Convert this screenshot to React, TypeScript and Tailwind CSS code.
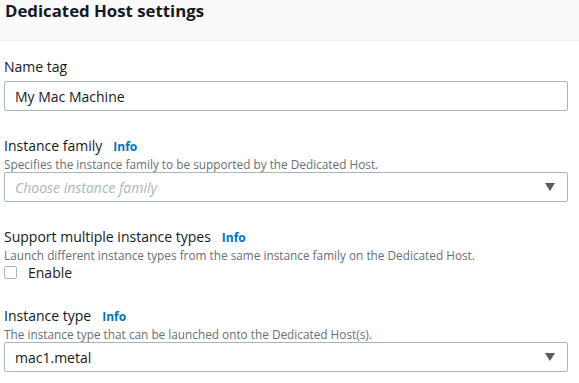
import { type ReactNode } from "react";

const font = { fontFamily: '"Open Sans", "Noto Sans", Arial, sans-serif' };

const Caret = () => (
  <svg
    aria-hidden="true"
    viewBox="0 0 10 8"
    className="h-[8px] w-[10px] fill-[#545b64]"
  >
    <path d="M0 0h10L5 8z" />
  </svg>
);

type FieldProps = {
  label: string;
  info?: boolean;
  description?: string;
  children: ReactNode;
};

const Field = ({ label, info, description, children }: FieldProps) => (
  <div className="flex flex-col">
    <div className="flex h-5 items-baseline gap-[11px] text-[14px] leading-5 text-[#16191f]">
      <span>{label}</span>
      {info ? (
        <a href="#" className="text-[12px] font-bold text-[#0073bb]">
          Info
        </a>
      ) : null}
    </div>
    {description ? (
      <p className="text-[11.8px] leading-4 text-[#687078]">{description}</p>
    ) : null}
    {children}
  </div>
);

const Select = ({ value, placeholder }: { value?: string; placeholder?: string }) => (
  <div className="flex h-[30px] items-center justify-between rounded-[2px] border border-[#aab7b8] pl-[10px] pr-[12px] text-[14px]">
    {value ? (
      <span className="text-[#16191f]">{value}</span>
    ) : (
      <span className="italic text-[#aab7b8]">{placeholder}</span>
    )}
    <Caret />
  </div>
);

export default function App() {
  return (
    <div className="h-[383px] w-[579px] overflow-hidden bg-white" style={font}>
      <div className="h-[41px] border-b border-[#eaeded] bg-[#fafafa] px-[5px]">
        <h2 className="text-[16.8px] font-bold leading-[22px] text-[#16191f]">
          Dedicated Host settings
        </h2>
      </div>
      <div className="flex flex-col gap-[25px] pl-[4px] pr-[11px] pt-[16px]">
        <Field label="Name tag">
          <input
            defaultValue="My Mac Machine"
            className="mt-[4px] h-[30px] rounded-[2px] border border-[#aab7b8] px-[10px] text-[14px] text-[#16191f] outline-none"
          />
        </Field>
        <Field
          label="Instance family"
          info
          description="Specifies the instance family to be supported by the Dedicated Host."
        >
          <Select placeholder="Choose instance family" />
        </Field>
        <Field
          label="Support multiple instance types"
          info
          description="Launch different instance types from the same instance family on the Dedicated Host."
        >
          <label className="flex h-[18px] items-center gap-[11px] text-[14px] text-[#16191f]">
            <span className="h-[13px] w-[13px] rounded-[2px] border border-[#aab7b8] bg-white" />
            Enable
          </label>
        </Field>
        <Field
          label="Instance type"
          info
          description="The instance type that can be launched onto the Dedicated Host(s)."
        >
          <Select value="mac1.metal" />
        </Field>
      </div>
    </div>
  );
}
